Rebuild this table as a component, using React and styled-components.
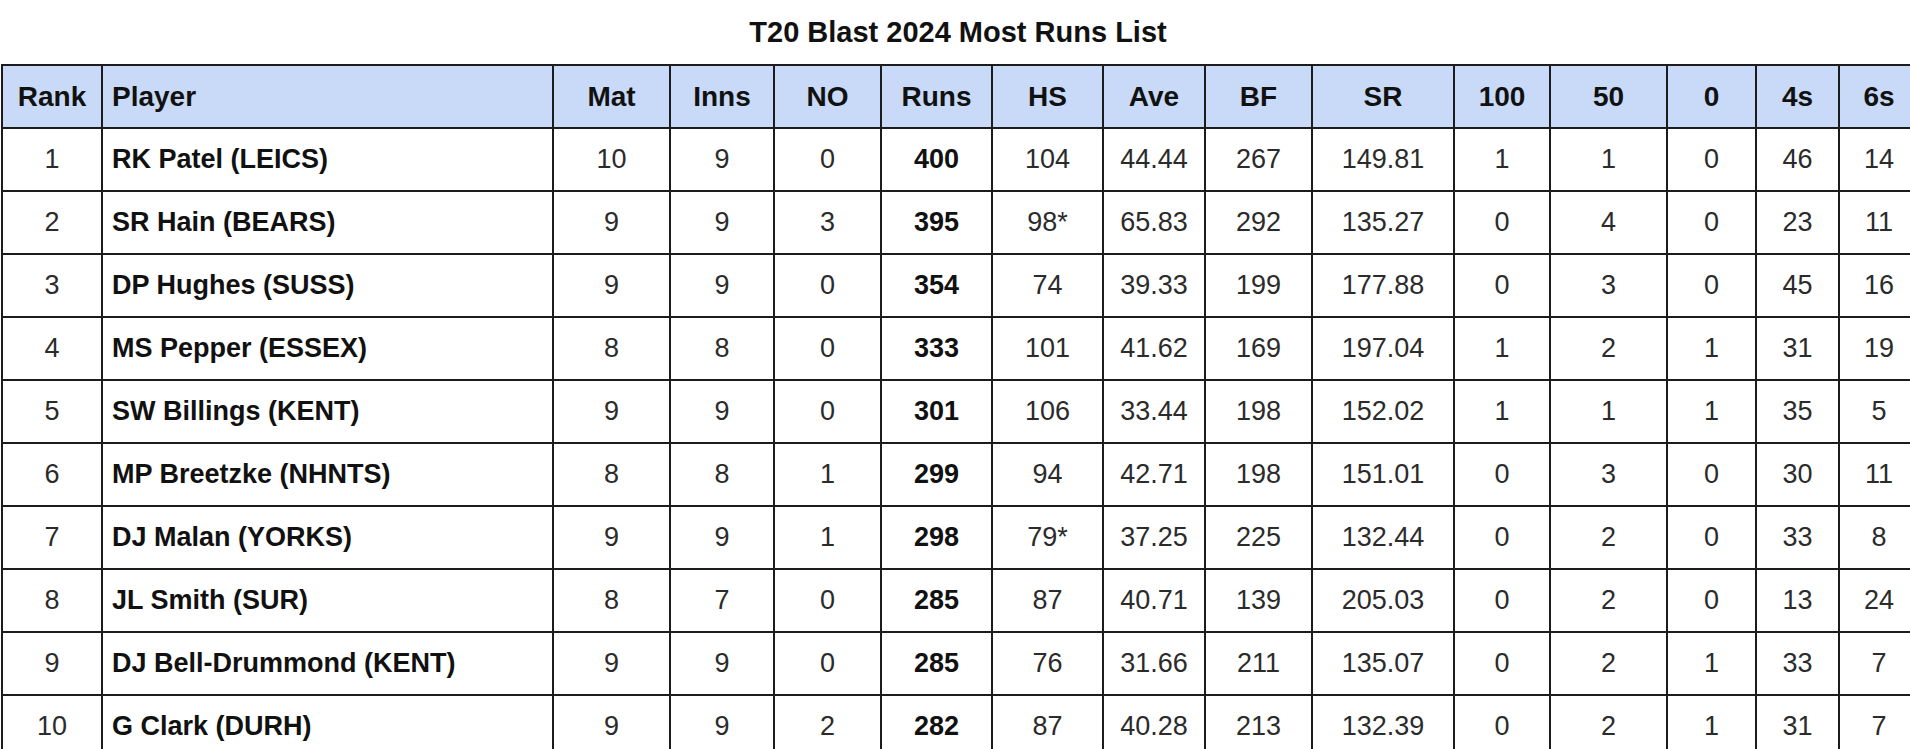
import styled, { createGlobalStyle } from "styled-components";

const GlobalStyle = createGlobalStyle`
  html, body {
    margin: 0;
    padding: 0;
    background: #ffffff;
    overflow: hidden;
  }
  body {
    font-family: "Liberation Sans", Arial, sans-serif;
  }
`;

const Page = styled.div`
  width: 1910px;
  height: 749px;
  overflow: hidden;
`;

const Title = styled.h1`
  margin: 0;
  height: 64px;
  display: flex;
  align-items: center;
  justify-content: center;
  padding-left: 6px;
  font-size: 29px;
  font-weight: 700;
  color: #111;
`;

const Table = styled.table`
  width: 1917px;
  table-layout: fixed;
  border-collapse: collapse;
  margin-left: 1px;
`;

const HeadRow = styled.tr`
  height: 63px;
  background: #c9daf8;
`;

const Row = styled.tr`
  height: 63px;
  background: #ffffff;
`;

const HeadCell = styled.th`
  border: 2px solid #1c1c1c;
  padding: 0 ${(p) => (p.$left ? "9px" : "0")};
  text-align: ${(p) => (p.$left ? "left" : "center")};
  font-size: 28px;
  font-weight: 700;
  color: #111;
  white-space: nowrap;
`;

const Cell = styled.td`
  border: 2px solid #1c1c1c;
  padding: 0 ${(p) => (p.$left ? "9px" : "0")};
  text-align: ${(p) => (p.$left ? "left" : "center")};
  font-size: 27px;
  font-weight: ${(p) => (p.$bold ? 700 : 400)};
  color: ${(p) => (p.$bold ? "#111" : "#2b2b2b")};
  white-space: nowrap;
`;

const columns = [
  { key: "Rank", width: 100 },
  { key: "Player", width: 451, left: true },
  { key: "Mat", width: 117 },
  { key: "Inns", width: 104 },
  { key: "NO", width: 107 },
  { key: "Runs", width: 111, bold: true },
  { key: "HS", width: 111 },
  { key: "Ave", width: 102 },
  { key: "BF", width: 107 },
  { key: "SR", width: 142 },
  { key: "100", width: 96 },
  { key: "50", width: 117 },
  { key: "0", width: 89 },
  { key: "4s", width: 83 },
  { key: "6s", width: 80 },
];

const rows = [
  ["1", "RK Patel (LEICS)", "10", "9", "0", "400", "104", "44.44", "267", "149.81", "1", "1", "0", "46", "14"],
  ["2", "SR Hain (BEARS)", "9", "9", "3", "395", "98*", "65.83", "292", "135.27", "0", "4", "0", "23", "11"],
  ["3", "DP Hughes (SUSS)", "9", "9", "0", "354", "74", "39.33", "199", "177.88", "0", "3", "0", "45", "16"],
  ["4", "MS Pepper (ESSEX)", "8", "8", "0", "333", "101", "41.62", "169", "197.04", "1", "2", "1", "31", "19"],
  ["5", "SW Billings (KENT)", "9", "9", "0", "301", "106", "33.44", "198", "152.02", "1", "1", "1", "35", "5"],
  ["6", "MP Breetzke (NHNTS)", "8", "8", "1", "299", "94", "42.71", "198", "151.01", "0", "3", "0", "30", "11"],
  ["7", "DJ Malan (YORKS)", "9", "9", "1", "298", "79*", "37.25", "225", "132.44", "0", "2", "0", "33", "8"],
  ["8", "JL Smith (SUR)", "8", "7", "0", "285", "87", "40.71", "139", "205.03", "0", "2", "0", "13", "24"],
  ["9", "DJ Bell-Drummond (KENT)", "9", "9", "0", "285", "76", "31.66", "211", "135.07", "0", "2", "1", "33", "7"],
  ["10", "G Clark (DURH)", "9", "9", "2", "282", "87", "40.28", "213", "132.39", "0", "2", "1", "31", "7"],
];

const App = () => {
  return (
    <Page>
      <GlobalStyle />
      <Title>T20 Blast 2024 Most Runs List</Title>
      <Table>
        <colgroup>
          {columns.map((col) => (
            <col key={col.key} style={{ width: col.width }} />
          ))}
        </colgroup>
        <thead>
          <HeadRow>
            {columns.map((col) => (
              <HeadCell key={col.key} $left={col.left}>
                {col.key}
              </HeadCell>
            ))}
          </HeadRow>
        </thead>
        <tbody>
          {rows.map((row) => (
            <Row key={row[0]}>
              {row.map((value, idx) => (
                <Cell
                  key={columns[idx].key}
                  $left={columns[idx].left}
                  $bold={columns[idx].left || columns[idx].bold}
                >
                  {value}
                </Cell>
              ))}
            </Row>
          ))}
        </tbody>
      </Table>
    </Page>
  );
};

export default App;
